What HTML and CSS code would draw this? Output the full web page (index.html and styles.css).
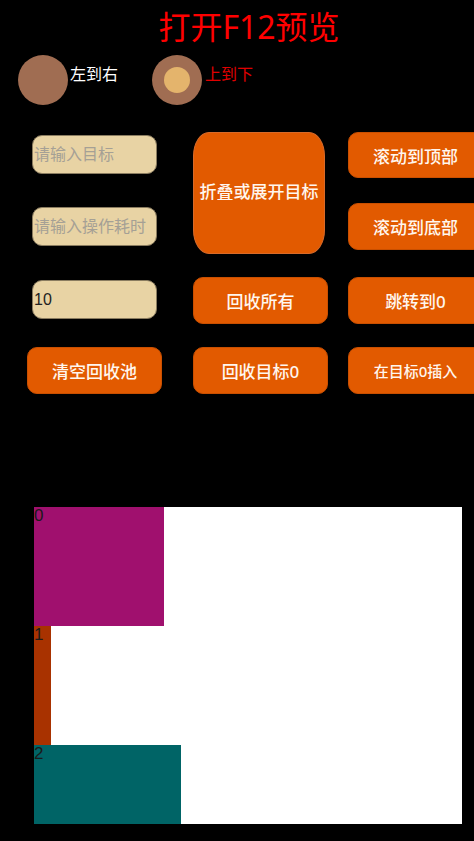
FILE: index.html
```html
<!DOCTYPE html>
<html lang="zh-CN">
<head>
<meta charset="utf-8">
<title>打开F12预览</title>
<link rel="stylesheet" href="styles.css">
</head>
<body>
<div class="page">
  <h1 class="title">打开F12预览</h1>
  <div class="modes">
    <div class="mode">
      <span class="dot"></span>
      <span class="mode-label mode-label-on">左到右</span>
    </div>
    <div class="mode">
      <span class="dot dot-selected"><span class="dot-inner"></span></span>
      <span class="mode-label mode-label-off">上到下</span>
    </div>
  </div>
  <div class="controls">
    <div class="cell col1 row1 stack-inputs">
      <input class="field field-first" type="text" placeholder="请输入目标">
      <input class="field field-second" type="text" placeholder="请输入操作耗时">
    </div>
    <button class="btn btn-tall col2 row1">折叠或展开目标</button>
    <div class="cell col3 row1 stack-btns">
      <button class="btn btn-top">滚动到顶部</button>
      <button class="btn btn-bottom">滚动到底部</button>
    </div>
    <div class="cell col1 row2 input-cell">
      <input class="field" type="text" value="10">
    </div>
    <button class="btn col2 row2">回收所有</button>
    <button class="btn col3 row2">跳转到0</button>
    <button class="btn col1 row3">清空回收池</button>
    <button class="btn col2 row3">回收目标0</button>
    <button class="btn btn-small col3 row3">在目标0插入</button>
  </div>
  <div class="list">
    <div class="item item-0"><span class="item-label">0</span></div>
    <div class="item item-1"><span class="item-label">1</span></div>
    <div class="item item-2"><span class="item-label">2</span></div>
  </div>
</div>
</body>
</html>
```

FILE: styles.css
```css
html {
  background: #000;
}
body {
  margin: 8px 0 8px 8px;
  font-family: "Noto Sans", "Noto Sans CJK SC", sans-serif;
  overflow: hidden;
}
.page {
  width: 482px;
}
.title {
  margin: 0;
  font-size: 32px;
  line-height: 38px;
  font-weight: normal;
  color: #ff0000;
  text-align: center;
}
.modes {
  display: flex;
  margin-top: 9px;
  padding-left: 10px;
  height: 50px;
}
.mode {
  display: flex;
  align-items: flex-start;
}
.mode + .mode {
  margin-left: 34px;
}
.dot {
  width: 50px;
  height: 50px;
  border-radius: 50%;
  background: #a06d52;
  display: flex;
  align-items: center;
  justify-content: center;
}
.dot-inner {
  width: 26px;
  height: 26px;
  border-radius: 50%;
  background: #e4b46c;
}
.mode-label {
  font-size: 16px;
  line-height: 20px;
  padding-top: 9px;
  margin-left: 2px;
}
.mode-label-on { color: #fff; }
.mode-label-off { color: #e00000; margin-left: 3px; }

.controls {
  display: grid;
  grid-template-columns: 166px 155px 135px;
  grid-template-rows: 122px 47px 47px;
  row-gap: 23px;
  margin-top: 27px;
  padding-left: 19px;
}
.col1 { grid-column: 1; }
.col2 { grid-column: 2; }
.col3 { grid-column: 3; }
.row1 { grid-row: 1; }
.row2 { grid-row: 2; }
.row3 { grid-row: 3; }

.cell {
  display: flex;
  flex-direction: column;
}
.btn {
  width: 135px;
  height: 47px;
  margin: 0;
  padding: 0;
  border: 1px solid #c94f00;
  border-radius: 10px;
  background: #e25a00;
  color: #fff6ee;
  font-family: "Noto Sans", "Noto Sans CJK SC", sans-serif;
  font-size: 17px;
  font-weight: 500;
  cursor: pointer;
}
.btn-tall {
  width: 132px;
  height: 122px;
  padding-bottom: 5px;
  border-radius: 16px / 24px;
  border: 1px solid #d86a28;
}
.stack-btns {
  gap: 25px;
}
.btn-top { height: 46px; }
.btn-small { font-size: 15px; }

.stack-inputs {
  padding-left: 5px;
}
.input-cell {
  padding-left: 5px;
  padding-top: 3px;
}
.field {
  box-sizing: border-box;
  width: 125px;
  height: 39px;
  margin: 0;
  padding: 0 1px;
  border: 1px solid #8a7c60;
  border-radius: 10px;
  background: #e8d3a4;
  color: #222;
  font-family: "Liberation Sans", "Noto Sans CJK SC", sans-serif;
  font-size: 16px;
  outline: none;
}
.field::placeholder {
  color: #a5a095;
  font-family: "Noto Sans", "Noto Sans CJK SC", sans-serif;
}
.field-first { margin-top: 3px; }
.field-second { margin-top: 33px; }

.list {
  width: 428px;
  height: 317px;
  margin-top: 113px;
  margin-left: 26px;
  background: #fff;
  overflow: hidden;
}
.item {
  height: 119px;
}
.item-0 { width: 130px; background: #a0106e; }
.item-1 { width: 17px; background: #a83200; }
.item-2 { width: 147px; background: #006466; }
.item-label {
  display: block;
  font-family: "Liberation Sans", sans-serif;
  font-size: 17px;
  line-height: 17px;
  color: #1a1a1a;
}
```
